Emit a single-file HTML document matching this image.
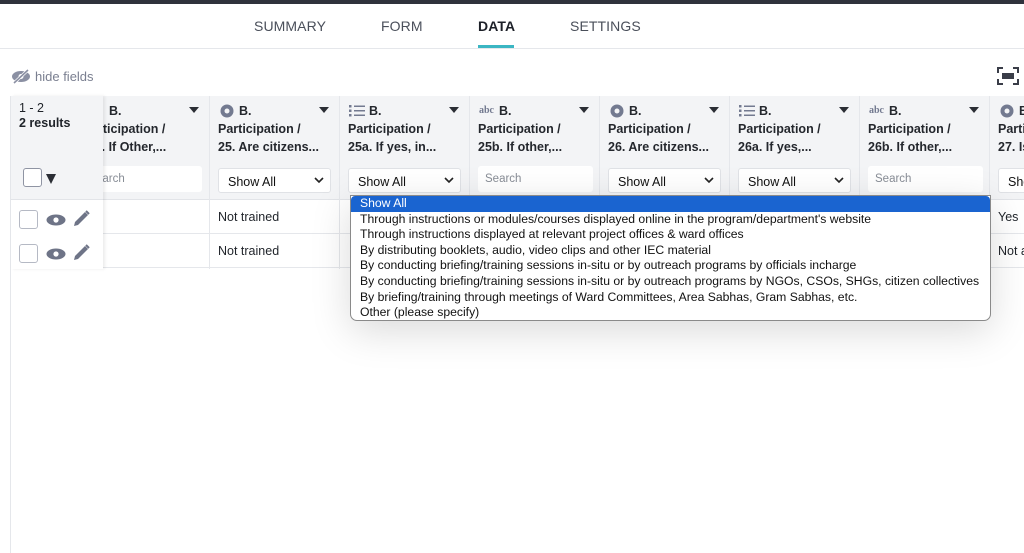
<!DOCTYPE html>
<html><head><meta charset="utf-8"><style>
*{box-sizing:border-box;margin:0;padding:0}
body{width:1024px;height:553px;overflow:hidden;background:#fff;font-family:"Liberation Sans",Arial,sans-serif;position:relative;color:#1f2329}
.a{position:absolute}
.tab{position:absolute;top:18px;font-size:14px;color:#4a4f5a;letter-spacing:.1px}
.col{position:absolute;top:96px;width:130px;height:173px;border-right:1px solid #e5e7eb}
.hd{position:absolute;top:0;left:0;right:0;height:104px;background:#f3f4f6;border-bottom:1px solid #e2e4e8}
.t{position:absolute;left:8px;top:6px;font-size:12.5px;font-weight:bold;line-height:18.5px;color:#24272d;white-space:nowrap}
.caret{position:absolute;right:10px;top:11px;width:0;height:0;border-left:5px solid transparent;border-right:5px solid transparent;border-top:6px solid #2b2e35}
.sel{position:absolute;left:8px;top:72px;width:113px;height:25px;background:#fff;border:1px solid #e0e2e6;border-radius:3px;font-size:12.5px;padding:6px 9px;color:#111;white-space:nowrap}
.sel svg{position:absolute;right:6px;top:8px}
.srch{position:absolute;left:8px;top:70px;width:115px;height:26px;background:#fff;border-radius:3px;font-size:11.5px;padding:7px 7px;color:#888d96}
.cell{position:absolute;left:0;right:0;height:34px;border-bottom:1px solid #e5e7eb;font-size:12.5px;padding:10px 8px;white-space:nowrap}
.opt{height:15.6px;line-height:15.6px;padding-left:9px;font-size:12.2px;color:#111;white-space:nowrap}
</style></head><body>
<div class="a" style="left:0;top:0;width:1024px;height:4px;background:#2f323c"></div>
<div class="tab" style="left:254px">SUMMARY</div>
<div class="tab" style="left:381px">FORM</div>
<div class="tab" style="left:478px;font-weight:bold;color:#1d2028">DATA</div>
<div class="tab" style="left:570px">SETTINGS</div>
<div class="a" style="left:478px;top:45px;width:36px;height:3px;background:#3bb6c3"></div>
<div class="a" style="left:0;top:48px;width:1024px;height:1px;background:#e5e7eb"></div>
<svg class="a" style="left:11px;top:69px" width="20" height="15" viewBox="0 0 20 15"><ellipse cx="10" cy="7.5" rx="9" ry="5.5" fill="#8b90a3"/><circle cx="10" cy="7.5" r="2.5" fill="#fff"/><line x1="3" y1="14" x2="17" y2="1" stroke="#fff" stroke-width="3"/><line x1="3" y1="14" x2="17" y2="1" stroke="#8b90a3" stroke-width="1.6"/></svg>
<div class="a" style="left:35px;top:69px;font-size:13px;color:#7a7f90">hide fields</div>
<svg class="a" style="left:997px;top:67px" width="22" height="18" viewBox="0 0 22 18"><path d="M1 6V1h5M16 1h5v5M21 12v5h-5M6 17H1v-5" fill="none" stroke="#3a3d48" stroke-width="2"/><rect x="5" y="6" width="12" height="6" fill="#3a3d48"/></svg>
<div class="a" style="left:10px;top:96px;width:1px;height:457px;background:#e5e7eb"></div>

<div class="col" style="left:80px"><div class="hd"><div class="t" style="left:29px">B.</div><div class="t" style="top:24px;left:18px">rticipation /</div><div class="t" style="top:42px;left:14px">b. If Other,...</div><div class="caret"></div><div class="srch" style="left:0;width:122px;padding-left:16px">earch</div></div>
<div class="cell" style="top:104px"></div><div class="cell" style="top:138px"></div></div>

<div class="col" style="left:210px"><div class="hd"><svg class="a" style="left:10px;top:8px" width="14" height="14"><circle cx="7" cy="7" r="6.5" fill="#737a90"/><circle cx="7" cy="7" r="2.5" fill="#f3f4f6"/></svg><div class="t" style="left:29px">B.</div><div class="t" style="top:24px">Participation /</div><div class="t" style="top:42px">25. Are citizens...</div><div class="caret"></div><div class="sel">Show All<svg width="10" height="7"><path d="M1 1l4 4 4-4" fill="none" stroke="#222" stroke-width="1.6"/></svg></div></div>
<div class="cell" style="top:104px">Not trained</div><div class="cell" style="top:138px">Not trained</div></div>

<div class="col" style="left:340px"><div class="hd"><svg class="a" style="left:9px;top:9px" width="16" height="12"><g fill="#737a90"><rect x="0" y="0" width="2.5" height="2.5"/><rect x="0" y="4.5" width="2.5" height="2.5"/><rect x="0" y="9" width="2.5" height="2.5"/><rect x="5" y="0.5" width="11" height="1.5"/><rect x="5" y="5" width="11" height="1.5"/><rect x="5" y="9.5" width="11" height="1.5"/></g></svg><div class="t" style="left:29px">B.</div><div class="t" style="top:24px">Participation /</div><div class="t" style="top:42px">25a. If yes, in...</div><div class="caret"></div><div class="sel">Show All<svg width="10" height="7"><path d="M1 1l4 4 4-4" fill="none" stroke="#222" stroke-width="1.6"/></svg></div></div>
<div class="cell" style="top:104px"></div><div class="cell" style="top:138px"></div></div>

<div class="col" style="left:470px"><div class="hd"><div class="a" style="left:9px;top:9px;font-size:10px;font-family:'Liberation Serif',serif;font-weight:bold;color:#737a90">abc</div><div class="t" style="left:29px">B.</div><div class="t" style="top:24px">Participation /</div><div class="t" style="top:42px">25b. If other,...</div><div class="caret"></div><div class="srch">Search</div></div>
<div class="cell" style="top:104px"></div><div class="cell" style="top:138px"></div></div>

<div class="col" style="left:600px"><div class="hd"><svg class="a" style="left:10px;top:8px" width="14" height="14"><circle cx="7" cy="7" r="6.5" fill="#737a90"/><circle cx="7" cy="7" r="2.5" fill="#f3f4f6"/></svg><div class="t" style="left:29px">B.</div><div class="t" style="top:24px">Participation /</div><div class="t" style="top:42px">26. Are citizens...</div><div class="caret"></div><div class="sel">Show All<svg width="10" height="7"><path d="M1 1l4 4 4-4" fill="none" stroke="#222" stroke-width="1.6"/></svg></div></div>
<div class="cell" style="top:104px"></div><div class="cell" style="top:138px"></div></div>

<div class="col" style="left:730px"><div class="hd"><svg class="a" style="left:9px;top:9px" width="16" height="12"><g fill="#737a90"><rect x="0" y="0" width="2.5" height="2.5"/><rect x="0" y="4.5" width="2.5" height="2.5"/><rect x="0" y="9" width="2.5" height="2.5"/><rect x="5" y="0.5" width="11" height="1.5"/><rect x="5" y="5" width="11" height="1.5"/><rect x="5" y="9.5" width="11" height="1.5"/></g></svg><div class="t" style="left:29px">B.</div><div class="t" style="top:24px">Participation /</div><div class="t" style="top:42px">26a. If yes,...</div><div class="caret"></div><div class="sel">Show All<svg width="10" height="7"><path d="M1 1l4 4 4-4" fill="none" stroke="#222" stroke-width="1.6"/></svg></div></div>
<div class="cell" style="top:104px"></div><div class="cell" style="top:138px"></div></div>

<div class="col" style="left:860px"><div class="hd"><div class="a" style="left:9px;top:9px;font-size:10px;font-family:'Liberation Serif',serif;font-weight:bold;color:#737a90">abc</div><div class="t" style="left:29px">B.</div><div class="t" style="top:24px">Participation /</div><div class="t" style="top:42px">26b. If other,...</div><div class="caret"></div><div class="srch">Search</div></div>
<div class="cell" style="top:104px"></div><div class="cell" style="top:138px"></div></div>

<div class="col" style="left:990px;overflow:hidden;width:40px"><div class="hd"><svg class="a" style="left:10px;top:8px" width="14" height="14"><circle cx="7" cy="7" r="6.5" fill="#737a90"/><circle cx="7" cy="7" r="2.5" fill="#f3f4f6"/></svg><div class="t" style="left:29px">B.</div><div class="t" style="top:24px">Participation /</div><div class="t" style="top:42px">27. Is</div><div class="sel">Show All</div></div>
<div class="cell" style="top:104px">Yes</div><div class="cell" style="top:138px">Not a</div></div>

<div class="a" style="left:11px;top:96px;width:92px;height:173px;background:#fff;box-shadow:2px 0 3px rgba(0,0,0,.08)">
<div class="a" style="left:0;top:0;width:92px;height:104px;background:#f3f4f6;border-bottom:1px solid #e2e4e8"></div>
<div class="a" style="left:8px;top:5px;font-size:12.5px;line-height:15px">1 - 2<br><b>2 results</b></div>
<div class="a" style="left:12px;top:72px;width:19px;height:19px;border:1px solid #8f94a3;border-radius:3px;background:#fff"></div>
<div class="a" style="left:35px;top:78px;width:0;height:0;border-left:5px solid transparent;border-right:5px solid transparent;border-top:10px solid #2b2e35"></div>
<div class="a" style="left:8px;top:114px;width:19px;height:19px;border:1px solid #b5b9c4;border-radius:3px"></div>
<div class="a" style="left:8px;top:148px;width:19px;height:19px;border:1px solid #b5b9c4;border-radius:3px"></div>
<svg class="a" style="left:35px;top:118px" width="20" height="12"><ellipse cx="10" cy="6" rx="9.5" ry="5.5" fill="#6e7487"/><circle cx="10" cy="6" r="2.6" fill="#fff"/></svg>
<svg class="a" style="left:35px;top:152px" width="20" height="12"><ellipse cx="10" cy="6" rx="9.5" ry="5.5" fill="#6e7487"/><circle cx="10" cy="6" r="2.6" fill="#fff"/></svg>
<svg class="a" style="left:62px;top:114px" width="17" height="17" viewBox="0 0 17 17"><path d="M1 16l1-4L12 2l3 3L5 15z" fill="#6e7487"/><path d="M13 1l3 3" stroke="#6e7487" stroke-width="2"/></svg>
<svg class="a" style="left:62px;top:148px" width="17" height="17" viewBox="0 0 17 17"><path d="M1 16l1-4L12 2l3 3L5 15z" fill="#6e7487"/><path d="M13 1l3 3" stroke="#6e7487" stroke-width="2"/></svg>
</div>

<div class="a" style="left:350px;top:195px;width:641px;height:126px;background:#fff;border:1px solid #8a8a8a;border-radius:0 0 7px 7px;box-shadow:0 10px 40px rgba(0,0,0,.15);overflow:hidden">
<div class="opt" style="background:#1a64d0;color:#fff;border-radius:4px 4px 0 0">Show All</div>
<div class="opt">Through instructions or modules/courses displayed online in the program/department's website</div>
<div class="opt">Through instructions displayed at relevant project offices &amp; ward offices</div>
<div class="opt">By distributing booklets, audio, video clips and other IEC material</div>
<div class="opt">By conducting briefing/training sessions in-situ or by outreach programs by officials incharge</div>
<div class="opt">By conducting briefing/training sessions in-situ or by outreach programs by NGOs, CSOs, SHGs, citizen collectives</div>
<div class="opt">By briefing/training through meetings of Ward Committees, Area Sabhas, Gram Sabhas, etc.</div>
<div class="opt">Other (please specify)</div>
</div>
</body></html>
